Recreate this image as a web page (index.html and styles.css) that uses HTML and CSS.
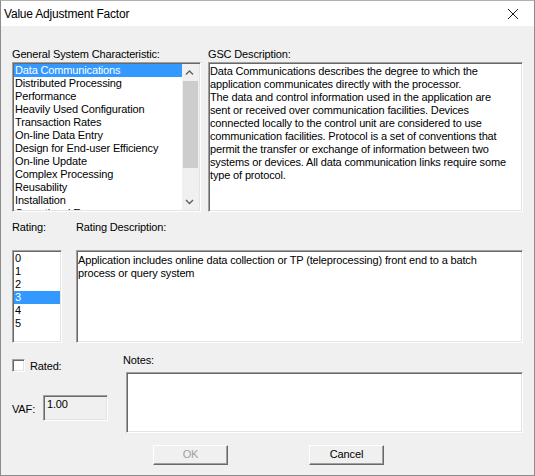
FILE: index.html
```html
<!DOCTYPE html>
<html>
<head>
<meta charset="utf-8">
<link rel="stylesheet" href="styles.css">
</head>
<body>
<div class="window">
  <div class="titlebar">
    <span class="title">Value Adjustment Factor</span>
    <svg class="close" width="12" height="12" viewBox="0 0 12 12"><path d="M1 1 L11 11 M11 1 L1 11" stroke="#1a1a1a" stroke-width="1" fill="none"/></svg>
  </div>
  <div class="content">
    <div class="row1">
      <div class="col">
        <div class="label">General System Characteristic:</div>
        <div class="sunken listbox gsc">
          <div class="items">
            <div class="item sel">Data Communications</div>
            <div class="item">Distributed Processing</div>
            <div class="item">Performance</div>
            <div class="item">Heavily Used Configuration</div>
            <div class="item">Transaction Rates</div>
            <div class="item">On-line Data Entry</div>
            <div class="item">Design for End-user Efficiency</div>
            <div class="item">On-line Update</div>
            <div class="item">Complex Processing</div>
            <div class="item">Reusability</div>
            <div class="item">Installation</div>
            <div class="item">Operational Ease</div>
          </div>
          <div class="scrollbar">
            <div class="arrow"><svg width="17" height="17" viewBox="0 0 17 17"><polyline points="4,10.5 7.5,7 11,10.5" fill="none" stroke="#606060" stroke-width="1.4"/></svg></div>
            <div class="track"><div class="thumb"></div></div>
            <div class="arrow"><svg width="17" height="17" viewBox="0 0 17 17"><polyline points="4,7 7.5,10.5 11,7" fill="none" stroke="#606060" stroke-width="1.4"/></svg></div>
          </div>
        </div>
      </div>
      <div class="col">
        <div class="label">GSC Description:</div>
        <div class="sunken textbox desc">Data Communications describes the degree to which the<br>application communicates directly with the processor.<br>The data and control information used in the application are<br>sent or received over communication facilities. Devices<br>connected locally to the control unit are considered to use<br>communication facilities. Protocol is a set of conventions that<br>permit the transfer or exchange of information between two<br>systems or devices. All data communication links require some<br>type of protocol.</div>
      </div>
    </div>
    <div class="row2">
      <div class="col">
        <div class="label">Rating:</div>
        <div class="sunken listbox rating">
          <div class="items">
            <div class="item">0</div>
            <div class="item">1</div>
            <div class="item">2</div>
            <div class="item sel">3</div>
            <div class="item">4</div>
            <div class="item">5</div>
          </div>
        </div>
      </div>
      <div class="col">
        <div class="label">Rating Description:</div>
        <div class="sunken textbox ratedesc">Application includes online data collection or TP (teleprocessing) front end to a batch<br>process or query system</div>
      </div>
    </div>
    <div class="row3">
      <div class="leftcol">
        <div class="check-row">
          <span class="checkbox"></span>
          <span class="check-label">Rated:</span>
        </div>
        <div class="vaf-row">
          <span class="vaf-label">VAF:</span>
          <div class="sunken vaf">1.00</div>
        </div>
      </div>
      <div class="notescol">
        <div class="label notes-label">Notes:</div>
        <div class="sunken notes"></div>
      </div>
    </div>
    <div class="buttons">
      <div class="btn disabled">OK</div>
      <div class="btn">Cancel</div>
    </div>
  </div>
</div>
</body>
</html>
```
FILE: styles.css
```css
html, body {
  margin: 0;
  padding: 0;
  background: #f0f0f0;
}
.window {
  width: 535px;
  height: 476px;
  box-sizing: border-box;
  border: 1px solid #8c8c8c;
  border-top-color: #b0b0b0;
  background: #f0f0f0;
  font-family: "Liberation Sans", Arial, sans-serif;
  font-size: 11px;
  letter-spacing: -0.15px;
  color: #000;
  overflow: hidden;
}
.titlebar {
  height: 25px;
  background: #fff;
  display: flex;
  align-items: center;
  justify-content: space-between;
  padding: 0 15px 0 3px;
}
.title {
  font-size: 12px;
  letter-spacing: -0.2px;
  color: #000;
  padding-top: 1px;
}
.close {
  display: block;
  margin-top: 1px;
}
.content {
  padding: 0 11px;
}
.label {
  line-height: 13px;
  height: 13px;
  white-space: nowrap;
}
.row1 {
  display: grid;
  grid-template-columns: 189px 315px;
  column-gap: 7px;
  margin-top: 22px;
}
.row1 .label {
  margin-bottom: 1px;
}
.sunken {
  box-sizing: border-box;
  background: #fff;
  border: 1px solid;
  border-color: #a0a0a0 #ffffff #ffffff #a0a0a0;
  box-shadow: inset 1px 1px #696969, inset -1px -1px #e3e3e3;
}
.listbox {
  display: flex;
  overflow: hidden;
  padding: 1px;
}
.gsc {
  height: 150px;
}
.items {
  flex: 1;
  overflow: hidden;
}
.item {
  height: 13px;
  line-height: 13px;
  padding-left: 1px;
  white-space: nowrap;
}
.item.sel {
  background: #3399ff;
  color: #fff;
}
.scrollbar {
  width: 17px;
  display: flex;
  flex-direction: column;
  background: #f0f0f0;
}
.arrow {
  height: 17px;
}
.arrow svg {
  display: block;
}
.track {
  flex: 1;
}
.thumb {
  margin: 0 1px;
  height: 87px;
  background: #cdcdcd;
}
.textbox {
  padding: 2px 1px 0 1px;
  line-height: 13px;
  white-space: nowrap;
  overflow: hidden;
}
.desc {
  height: 150px;
}
.row2 {
  display: grid;
  grid-template-columns: 50px 447px;
  column-gap: 14px;
  margin-top: 9px;
}
.row2 .label {
  margin-bottom: 16px;
}
.rating {
  height: 93px;
}
.ratedesc {
  height: 93px;
  padding-top: 3px;
}
.row3 {
  display: flex;
  margin-top: 11px;
}
.leftcol {
  width: 111px;
}
.check-row {
  display: flex;
  align-items: center;
  margin-top: 5px;
  height: 13px;
}
.checkbox {
  width: 13px;
  height: 13px;
  box-sizing: border-box;
  background: #fff;
  border: 1px solid;
  border-color: #a0a0a0 #ffffff #ffffff #a0a0a0;
  box-shadow: inset 1px 1px #696969, inset -1px -1px #e3e3e3;
}
.check-label {
  margin-left: 5px;
  line-height: 13px;
  padding-top: 1px;
}
.vaf-row {
  display: flex;
  align-items: center;
  margin-top: 23px;
}
.vaf-label {
  width: 31px;
  line-height: 13px;
  padding-top: 2px;
}
.vaf {
  width: 65px;
  height: 26px;
  background: #f0f0f0;
  padding: 2px 0 0 3px;
  line-height: 13px;
}
.notescol {
  flex: 1;
}
.notes-label {
  margin-bottom: 5px;
}
.notes {
  margin-left: 3px;
  height: 61px;
}
.buttons {
  display: flex;
  gap: 81px;
  padding-left: 141px;
  margin-top: 12px;
}
.btn {
  width: 75px;
  height: 20px;
  box-sizing: border-box;
  background: #f0f0f0;
  border: 1px solid;
  border-color: #ffffff #696969 #696969 #ffffff;
  box-shadow: inset -1px -1px #a0a0a0;
  text-align: center;
  line-height: 17px;
  font-size: 11px;
}
.btn.disabled {
  color: #a0a0a0;
}
```
